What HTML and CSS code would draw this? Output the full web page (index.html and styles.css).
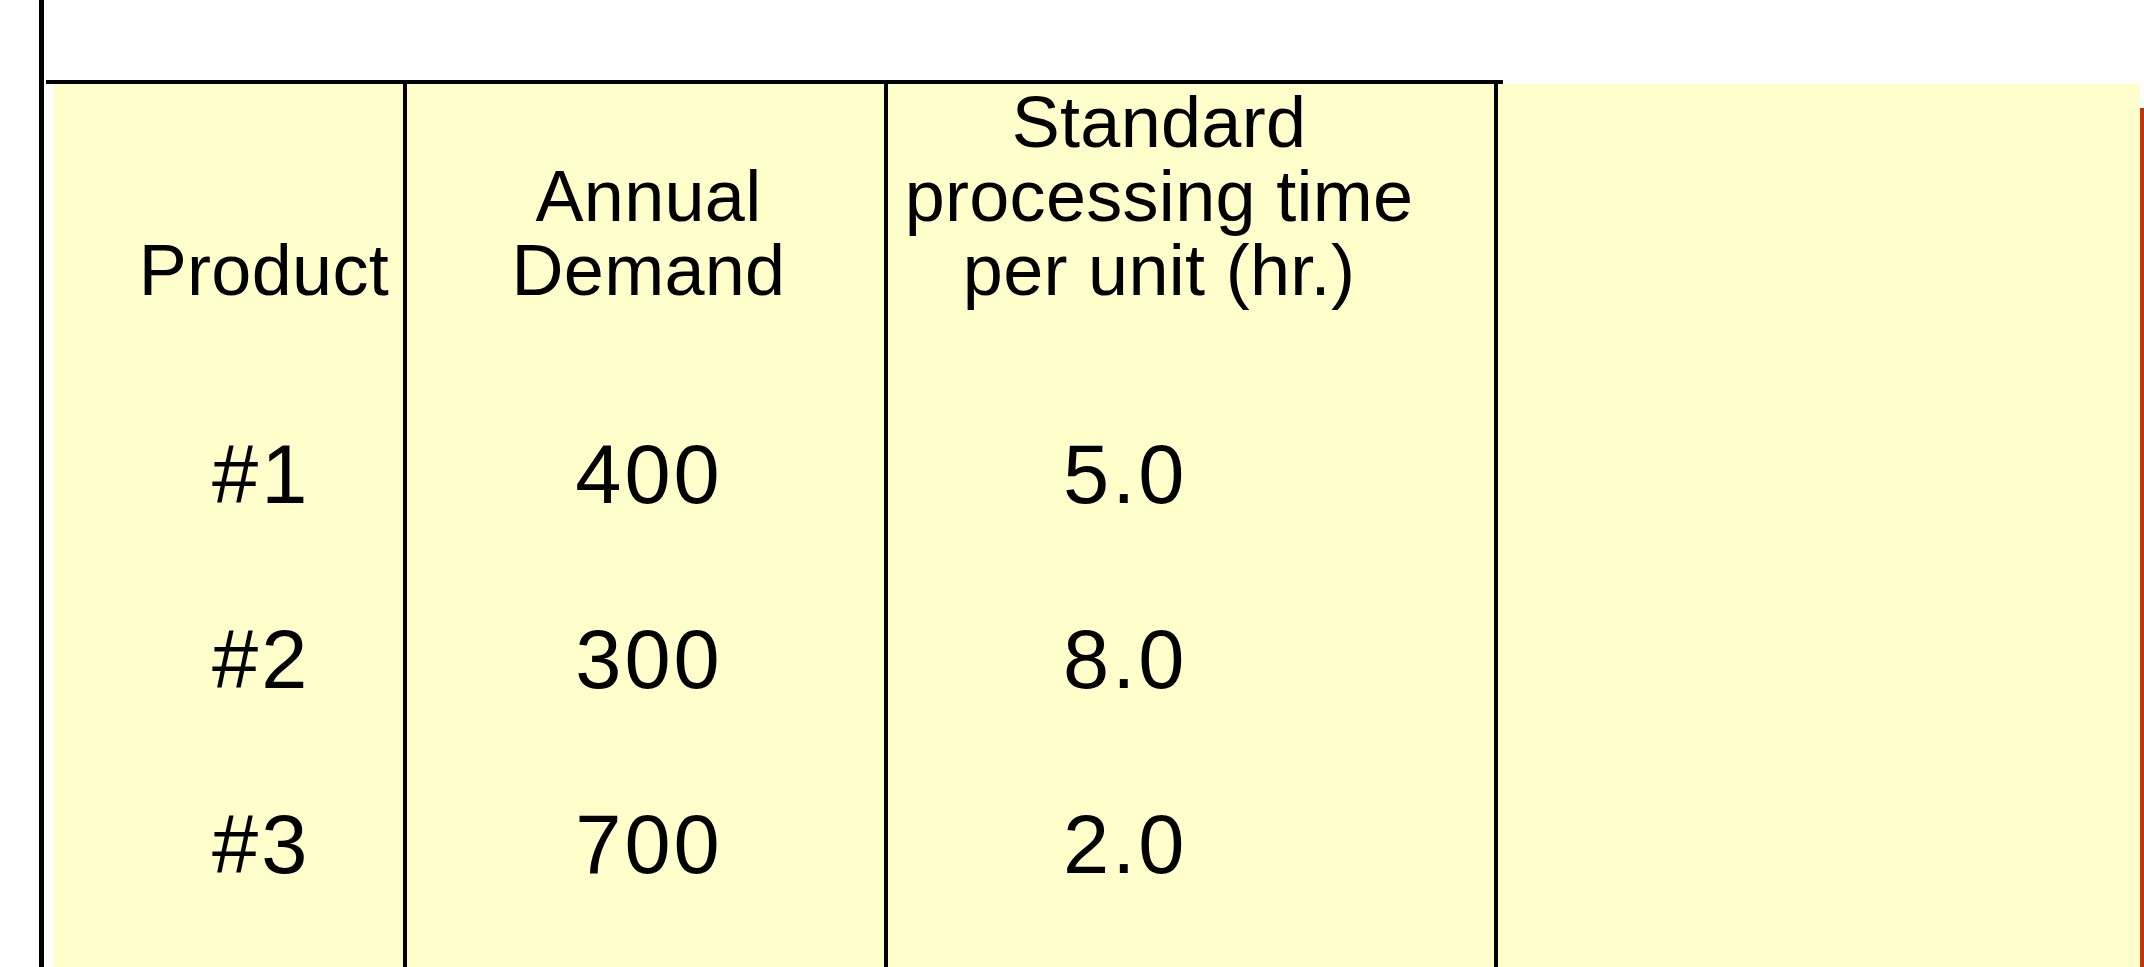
FILE: index.html
```html
<!DOCTYPE html>
<html lang="en">
<head>
<meta charset="utf-8">
<title>Products</title>
<link rel="stylesheet" href="styles.css">
</head>
<body>
<div class="page">
  <div class="rule-v"></div>
  <div class="main">
    <div class="top-space"></div>
    <div class="rule-h"></div>
    <div class="body-row">
      <div class="sheet">
        <div class="col col-product">
          <div class="head"><span>Product</span></div>
          <div class="cell">#1</div>
          <div class="cell">#2</div>
          <div class="cell">#3</div>
        </div>
        <div class="col col-demand">
          <div class="head"><span>Annual</span><span>Demand</span></div>
          <div class="cell">400</div>
          <div class="cell">300</div>
          <div class="cell">700</div>
        </div>
        <div class="col col-time">
          <div class="head"><span>Standard</span><span>processing time</span><span>per unit (hr.)</span></div>
          <div class="cell">5.0</div>
          <div class="cell">8.0</div>
          <div class="cell">2.0</div>
        </div>
        <div class="col col-empty"></div>
      </div>
      <div class="edge"></div>
    </div>
  </div>
</div>
</body>
</html>
```

FILE: styles.css
```css
* { box-sizing: border-box; }

html, body {
  margin: 0;
  padding: 0;
  background: #ffffff;
}

body {
  font-family: "Liberation Sans", Arial, sans-serif;
  color: #000000;
}

.page {
  display: flex;
  height: 967px;
  width: 2144px;
  overflow: hidden;
}

.rule-v {
  margin-left: 39px;
  width: 5px;
  background: #000000;
  flex: none;
}

.main {
  flex: 1;
  display: flex;
  flex-direction: column;
  min-width: 0;
}

.top-space {
  height: 80px;
  flex: none;
}

.rule-h {
  margin-left: 2px;
  width: 1457px;
  height: 4px;
  background: #000000;
  flex: none;
}

.body-row {
  flex: 1;
  display: flex;
}

.sheet {
  margin-left: 10px;
  flex: 1;
  background: #ffffcc;
  display: flex;
}

.edge {
  width: 4px;
  margin-top: 24px;
  background: #c0360a;
  flex: none;
}

.col {
  display: flex;
  flex-direction: column;
  border-right: 4px solid #000000;
}

.col-product { width: 353px; }
.col-demand { width: 481px; }
.col-time { width: 610px; }
.col-empty { flex: 1; border-right: none; }

.head {
  height: 298px;
  padding-top: 1px;
  padding-bottom: 75px;
  display: flex;
  flex-direction: column;
  justify-content: flex-end;
  font-size: 72px;
  line-height: 74px;
  letter-spacing: 0.3px;
  white-space: nowrap;
}

.cell {
  height: 185px;
  font-size: 83px;
  line-height: 185px;
  letter-spacing: 3px;
  white-space: nowrap;
}

.col-product .head {
  align-items: flex-end;
  padding-right: 14px;
}

.col-product .cell {
  padding-left: 158px;
}

.col-demand .head {
  align-items: center;
  padding-left: 6px;
}

.col-demand .cell {
  text-align: center;
  padding-left: 7px;
}

.col-time .head {
  align-items: center;
  padding-right: 64px;
}

.col-time .cell {
  padding-left: 175px;
}
```
